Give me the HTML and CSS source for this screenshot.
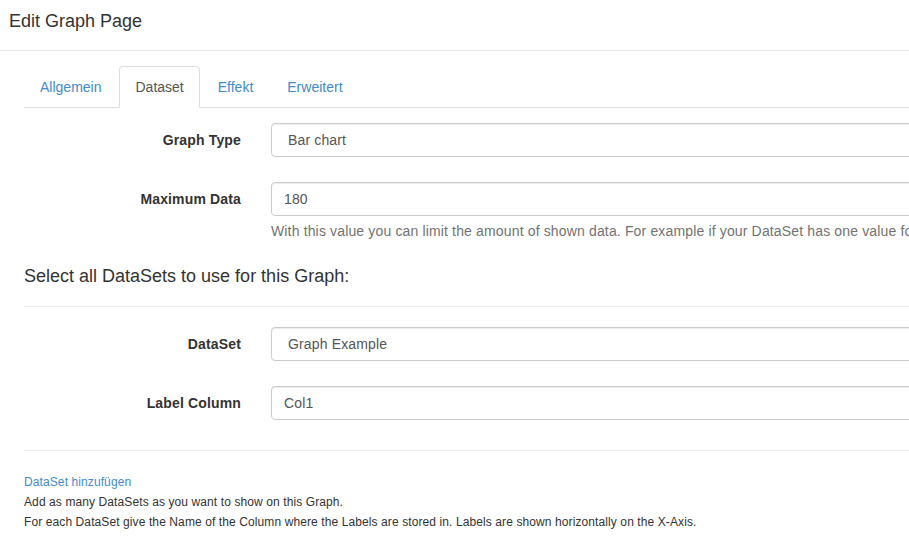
FILE: index.html
```html
<!DOCTYPE html>
<html>
<head>
<meta charset="utf-8">
<link rel="stylesheet" href="styles.css">
</head>
<body>
<div class="page">
  <div class="header"><h1 class="title">Edit Graph Page</h1></div>
  <div class="content">
    <ul class="tabs">
      <li><a class="tab">Allgemein</a></li>
      <li><a class="tab active">Dataset</a></li>
      <li><a class="tab">Effekt</a></li>
      <li><a class="tab">Erweitert</a></li>
    </ul>
    <div class="pane">
      <div class="group">
        <label class="label">Graph Type</label>
        <div class="field"><div class="control select">Bar chart</div></div>
      </div>
      <div class="group">
        <label class="label">Maximum Data</label>
        <div class="field">
          <div class="control">180</div>
          <p class="help">With this value you can limit the amount of shown data. For example if your DataSet has one value for each day of the year, you can limit it to the last 180 days.</p>
        </div>
      </div>
      <h4 class="section">Select all DataSets to use for this Graph:</h4>
      <hr class="rule">
      <div class="group">
        <label class="label">DataSet</label>
        <div class="field"><div class="control select">Graph Example</div></div>
      </div>
      <div class="group">
        <label class="label">Label Column</label>
        <div class="field"><div class="control">Col1</div></div>
      </div>
      <hr class="rule rule2">
      <div class="notes">
        <a class="add">DataSet hinzufügen</a>
        <p>Add as many DataSets as you want to show on this Graph.</p>
        <p>For each DataSet give the Name of the Column where the Labels are stored in. Labels are shown horizontally on the X-Axis.</p>
      </div>
    </div>
  </div>
</div>
</body>
</html>
```
FILE: styles.css
```css
html, body { margin: 0; padding: 0; background: #fff; overflow: hidden; }
body { font-family: "Liberation Sans", Arial, sans-serif; font-size: 14px; color: #333; line-height: 1.42857; letter-spacing: 0.15px; }
.page { width: 1200px; }
.header { height: 50px; border-bottom: 1px solid #e5e5e5; padding: 0 9px; display: flex; align-items: center; }
.title { margin: 0; font-size: 18px; font-weight: normal; color: #333; line-height: 1; position: relative; top: -4px; letter-spacing: 0; }
.content { padding: 15px 0 0 24px; }
.tabs { list-style: none; margin: 0; padding: 0; display: flex; border-bottom: 1px solid #ddd; letter-spacing: 0; }
.tabs li { margin-right: 2px; margin-bottom: -1px; }
.tab { display: block; padding: 10px 15px; border: 1px solid transparent; border-radius: 4px 4px 0 0; color: #428bca; line-height: 20px; }
.tab.active { color: #555; border-color: #ddd; border-bottom-color: #fff; background: #fff; }
.pane { padding-top: 15px; }
.group { display: grid; grid-template-columns: 217px 1fr; column-gap: 30px; margin-bottom: 25px; }
.label { font-weight: bold; text-align: right; padding-top: 7px; line-height: 20px; }
.control { height: 34px; box-sizing: border-box; border: 1px solid #ccc; border-radius: 4px; padding: 6px 12px; line-height: 20px; color: #555; box-shadow: inset 0 1px 1px rgba(0,0,0,.075); white-space: nowrap; }
.control.select { padding-left: 16px; }
.help { margin: 5px 0 0; color: #737373; white-space: nowrap; line-height: 20px; }
.section { margin: 0; font-size: 18px; font-weight: normal; line-height: 20px; color: #333; letter-spacing: 0; }
.rule { border: 0; border-top: 1px solid #eee; margin: 20px 0 20px; }
.rule2 { margin: 30px 0 0; }
.notes { padding-top: 21px; font-size: 12px; line-height: 20px; letter-spacing: 0.1px; }
.notes p { margin: 0; }
.add { color: #428bca; display: block; }
```
